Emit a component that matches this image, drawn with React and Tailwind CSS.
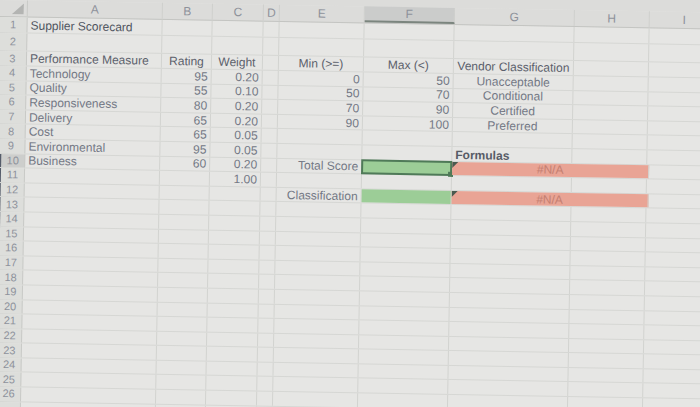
const COLS = [
  { key: "A", w: 135 },
  { key: "B", w: 50 },
  { key: "C", w: 51 },
  { key: "D", w: 16 },
  { key: "E", w: 85 },
  { key: "F", w: 90 },
  { key: "G", w: 120 },
  { key: "H", w: 75 },
  { key: "I", w: 70 },
];

const widthClass = {
  A: "w-[135px]",
  B: "w-[50px]",
  C: "w-[51px]",
  D: "w-[16px]",
  E: "w-[85px]",
  F: "w-[90px]",
  G: "w-[120px]",
  H: "w-[75px]",
  I: "w-[70px]",
};

const L = "justify-start pl-[3px]";
const R = "justify-end pr-[3px]";
const C = "justify-center";
const HEAD = "text-[#5b606b]";

const measures = [
  ["Technology", "95", "0.20"],
  ["Quality", "55", "0.10"],
  ["Responsiveness", "80", "0.20"],
  ["Delivery", "65", "0.20"],
  ["Cost", "65", "0.05"],
  ["Environmental", "95", "0.05"],
  ["Business", "60", "0.20"],
];

const bands = [
  ["0", "50", "Unacceptable"],
  ["50", "70", "Conditional"],
  ["70", "90", "Certified"],
  ["90", "100", "Preferred"],
];

function buildRows() {
  const rows = {};
  rows[1] = { A: { text: "Supplier Scorecard", align: L, cls: "text-[#4f545e]" } };
  rows[3] = {
    A: { text: "Performance Measure", align: L, cls: HEAD },
    B: { text: "Rating", align: C, cls: HEAD },
    C: { text: "Weight", align: C, cls: HEAD },
    E: { text: "Min (>=)", align: C, cls: HEAD },
    F: { text: "Max (<)", align: C, cls: HEAD },
    G: { text: "Vendor Classification", align: C, cls: HEAD },
  };
  measures.forEach(([name, rating, weight], i) => {
    const r = rows[4 + i] || (rows[4 + i] = {});
    r.A = { text: name, align: L };
    r.B = { text: rating, align: R };
    r.C = { text: weight, align: R };
  });
  bands.forEach(([min, max, label], i) => {
    const r = rows[4 + i];
    r.E = { text: min, align: R };
    r.F = { text: max, align: R };
    r.G = { text: label, align: C };
  });
  rows[9].G = { text: "Formulas", align: L, cls: "font-bold text-[#565b66] items-end" };
  rows[10].E = { text: "Total Score", align: R };
  rows[10].F = { text: "", green: true, selected: true };
  rows[10].GH = { text: "#N/A", red: true };
  rows[11] = { C: { text: "1.00", align: R } };
  rows[12] = {
    E: { text: "Classification", align: R },
    F: { text: "", green: true },
    GH: { text: "#N/A", red: true },
  };
  return rows;
}

function Cell({ col, cell }) {
  const base = `flex h-full shrink-0 items-center border-r border-[#d2d3d0] ${widthClass[col]}`;
  if (!cell) return <div className={base} />;
  if (cell.green) {
    return (
      <div className={`${base} relative bg-[#9ccd97]`}>
        {cell.selected ? (
          <div className="absolute -inset-[1px] border-2 border-[#4f7a58]">
            <div className="absolute -bottom-[3px] -right-[3px] h-[5px] w-[5px] bg-[#4f7a58]" />
          </div>
        ) : null}
      </div>
    );
  }
  return (
    <div className={`${base} ${cell.align} ${cell.cls || "text-[#737884]"} whitespace-nowrap`}>
      {cell.text}
    </div>
  );
}

function Row({ num, data, highlighted }) {
  return (
    <div className="flex h-[14.6px] border-b border-[#d6d7d4]">
      <div
        className={`flex h-full w-[28px] shrink-0 items-center justify-center border-r border-[#c9cac7] text-[11px] text-[#8e929b] ${
          highlighted ? "bg-[#cdcecc]" : "bg-[#dddedb]"
        } ${num >= 10 ? "border-l-[4px] border-l-[#555c6a]" : ""}`}
      >
        {num <= 26 ? num : ""}
      </div>
      {COLS.map(({ key }) => {
        if (data && data.GH && key === "G") {
          return (
            <div
              key="GH"
              className="relative flex h-full w-[197px] shrink-0 items-center justify-center border-r border-[#d2d3d0] bg-[#e9a495] text-[#c47f71]"
            >
              <svg className="absolute left-0 top-0" width="6" height="6" viewBox="0 0 6 6">
                <path d="M0 0 H6 L0 6 Z" fill="#4a5a50" />
              </svg>
              {data.GH.text}
            </div>
          );
        }
        if (data && data.GH && key === "H") {
          return <div key="H2" className="h-full w-[73px] shrink-0 border-r border-[#d2d3d0]" />;
        }
        return <Cell key={key} col={key} cell={data ? data[key] : null} />;
      })}
    </div>
  );
}

function TallRow({ num, data, h }) {
  return (
    <div className={`flex border-b border-[#d6d7d4] ${h}`}>
      <div className="flex h-full w-[28px] shrink-0 items-center justify-center border-r border-[#c9cac7] bg-[#dddedb] text-[11px] text-[#8e929b]">
        {num}
      </div>
      {COLS.map(({ key }) => (
        <Cell key={key} col={key} cell={data ? data[key] : null} />
      ))}
    </div>
  );
}

export default function App() {
  const rows = buildRows();
  const lower = [];
  for (let n = 4; n <= 27; n += 1) lower.push(n);

  return (
    <div
      className="h-screen w-screen overflow-hidden bg-[#dcdcda] text-[12px] leading-none"
      style={{ fontFamily: '"Liberation Sans", Arial, sans-serif' }}
    >
      <div className="w-[720px] origin-top-left rotate-[1deg] bg-[#e6e6e4]">
        <div className="flex h-[17px] border-b border-[#c4c5c2] bg-[#dcdcda] text-[12px] text-[#8e929b]">
          <div className="relative h-full w-[28px] shrink-0 border-r border-[#c9cac7]">
            <svg className="absolute bottom-[2px] right-[3px]" width="12" height="11" viewBox="0 0 12 11">
              <path d="M12 0 V11 H0 Z" fill="#b3b4b2" />
            </svg>
          </div>
          {COLS.map(({ key }) => (
            <div
              key={key}
              className={`flex h-full shrink-0 items-center justify-center border-r border-[#cfd0cd] ${widthClass[key]} ${
                key === "F" ? "border-b-2 border-b-[#7b857e] bg-[#cbcccb]" : ""
              }`}
            >
              {key}
            </div>
          ))}
        </div>
        <TallRow num={1} data={rows[1]} h="h-[16px]" />
        <TallRow num={2} data={rows[2]} h="h-[18px]" />
        <TallRow num={3} data={rows[3]} h="h-[15px]" />
        {lower.map((n) => (
          <Row key={n} num={n} data={rows[n]} highlighted={n === 10} />
        ))}
      </div>
    </div>
  );
}
